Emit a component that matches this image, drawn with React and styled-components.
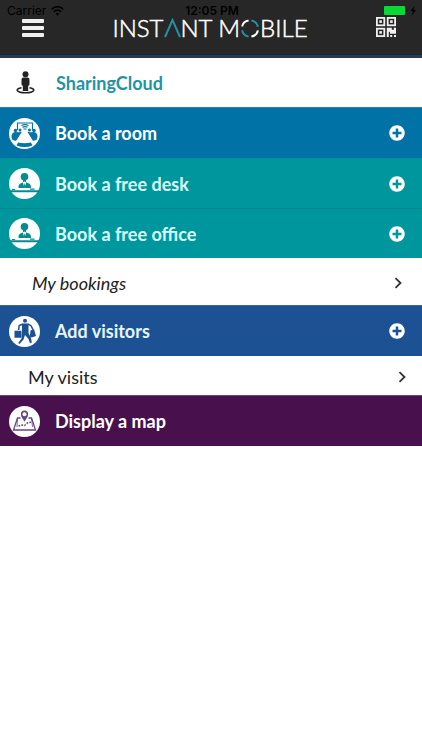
import styled, { createGlobalStyle } from "styled-components"
import { FaPlusCircle } from "react-icons/fa"

const GlobalStyle = createGlobalStyle`
    * {
        box-sizing: border-box;
    }

    body {
        margin: 0;
        background-color: white;
        font-family: Lato, "Open Sans", sans-serif;
    }
`

const Header = styled.header`
    position: relative;
    display: flex;
    justify-content: space-between;
    align-items: center;
    height: 58px;
    padding: 0 26px 0 22px;
    background-color: #272727;
    border-bottom: 3px solid #243a5e;
`

const StatusBar = styled.div`
    position: absolute;
    top: 0;
    left: 0;
    right: 0;
    display: grid;
    grid-template-columns: 1fr auto 1fr;
    align-items: center;
    height: 21px;
    padding: 0 5px 0 7px;
    color: black;
    font-family: Inter, "Liberation Sans", sans-serif;
    font-size: 12px;
    line-height: 12px;
    pointer-events: none;
`

const Network = styled.span`
    display: flex;
    align-items: center;
    gap: 5px;
`

const Clock = styled.span`
    font-weight: 600;
`

const Power = styled.span`
    display: flex;
    justify-content: flex-end;
    align-items: center;
`

const IconButton = styled.button`
    display: flex;
    padding: 0;
    border: none;
    background: none;
    color: #f0f0f0;
    cursor: pointer;
`

const Logo = styled.h1`
    display: flex;
    align-items: center;
    margin: 0;
    color: white;
    font-size: 24px;
    font-weight: 300;
    line-height: 20px;
    -webkit-text-stroke: 0.5px white;

    svg {
        display: block;
    }
`

const Menu = styled.nav`
    display: flex;
    flex-direction: column;
`

const Site = styled.div`
    display: flex;
    align-items: center;
    height: 49px;
    padding: 0 12px;
    gap: 18px;
    color: #1e94a4;
    font-size: 18px;
    font-weight: 700;
`

const SiteIcon = styled.span`
    display: flex;
    justify-content: center;
    width: 26px;
`

const MenuItem = styled.div`
    display: flex;
    align-items: center;
    height: ${props => (props.$tall ? "51px" : "50px")};
    padding: 0 17px 0 9px;
    background-color: ${props => props.$color};
    border-top: 1px solid ${props => props.$edge};
    color: white;
`

const MenuLink = styled.a`
    display: flex;
    flex: 1;
    align-items: center;
    gap: 15px;
    color: ${props => props.$color || "white"};
    font-size: 18px;
    font-weight: 700;
    text-decoration: none;
`

const SubLink = styled.a`
    display: flex;
    justify-content: space-between;
    align-items: center;
    height: ${props => (props.$compact ? "39px" : "47px")};
    padding: ${props => (props.$compact ? "2px 16px 0 28px" : "2px 20px 0 32px")};
    color: #222222;
    font-size: 18px;
    font-style: ${props => (props.$italic ? "italic" : "normal")};
    text-decoration: none;
`

function WifiIcon() {
    return (
        <svg width="13" height="10" viewBox="0 0 13 10" fill="none" stroke="black" strokeWidth="1.7">
            <path d="M.7 3.5C4-.2 9-.2 12.3 3.5M2.9 5.8C5 3.6 8 3.6 10.1 5.8" />
            <path d="M4.5 7.5Q6.5 5.8 8.5 7.5L6.5 9.7Z" fill="black" stroke="none" />
        </svg>
    )
}

function BatteryIcon() {
    return (
        <svg width="33" height="10" viewBox="0 0 33 10">
            <rect width="21" height="9" rx="1" fill="#08d936" />
            <path d="M22.500 3q2 1.700 0 3.400z" fill="black" />
            <path d="M30.500 0l-4 5h2.500L27.700 9.500 32 4h-2.500z" fill="black" />
        </svg>
    )
}

function BarsIcon() {
    return (
        <svg width="22" height="18" viewBox="0 0 22 18" fill="currentColor">
            <rect width="22" height="4" rx="1" />
            <rect y="7" width="22" height="4" rx="1" />
            <rect y="14" width="22" height="4" rx="1" />
        </svg>
    )
}

function QrIcon() {
    return (
        <svg width="20" height="22" viewBox="0 0 20 22">
            <g fill="none" stroke="currentColor" strokeWidth="1.800">
                <rect x=".9" y=".9" width="7.400" height="7.400" />
                <rect x="11.700" y=".9" width="7.400" height="7.400" />
                <rect x=".9" y="11.700" width="7.400" height="7.400" />
            </g>
            <g fill="currentColor">
                <rect x="3.300" y="3.300" width="2.600" height="2.600" />
                <rect x="14.100" y="3.300" width="2.600" height="2.600" />
                <rect x="3.300" y="14.100" width="2.600" height="2.600" />
                <path d="M10.800 10.800h5v2h2v-2H20v6h-6v-2h-1.200V20h-2z" />
                <path d="M14.200 18h2v2h-2zM18 18h2v2h-2z" />
            </g>
        </svg>
    )
}

function SiteMarker() {
    return (
        <svg width="19" height="23" viewBox="0 0 19 23" fill="#222222">
            <circle cx="9.500" cy="3.200" r="3" />
            <path d="M7.500 6.500h4q2 0 2 2v5q0 1-1.300 1.200V20H6.800v-5.300Q5.500 14.500 5.500 13.500v-5q0-2 2-2z" />
            <path d="M5.500 16.700C-1 17.800-.2 21.800 9.500 21.800s10.500-4 4-5.100" fill="none" stroke="#222222" strokeWidth="1.600" />
        </svg>
    )
}

function ChevronIcon() {
    return (
        <svg width="8" height="12" viewBox="0 0 8 12" fill="none" stroke="#333333" strokeWidth="1.800">
            <path d="M1.500 1.200L6.500 6l-5 4.800" />
        </svg>
    )
}

function RoomIcon() {
    return (
        <svg width="31" height="31" viewBox="0 0 31 31">
            <circle cx="15.5" cy="15.5" r="15.5" fill="white" />
            <g fill="none" stroke="#0873a5">
                <path d="M8.500 12V5h15v7" strokeWidth="1.200" />
                <path d="M12.500 7.500q3.500-1.800 7 0M13.500 9.300q2.500-1.300 5 0" strokeWidth="1.100" />
            </g>
            <g fill="#0873a5">
                <path d="M14.500 10.500h3v1h-3z" />
                <circle cx="6.500" cy="12.500" r="1.800" />
                <circle cx="25" cy="12.500" r="1.800" />
                <circle cx="11" cy="12" r="1.500" />
                <circle cx="20.500" cy="12" r="1.500" />
                <path d="M2.500 19q0-4.500 3.500-5l4 .2q2-1 3-.2L7.500 23l-4-1zM28.500 19q0-4.500-3.500-5l-4 .2q-2-1-3-.2L23.500 23l4-1z" />
                <path d="M9 24.500q6.500 1.500 13 0l1.500 3q-8 3-16 0z" />
            </g>
            <path d="M13 14h5.500l5.500 9q-8.500 1.500-17 0z" fill="white" />
        </svg>
    )
}

function DeskIcon() {
    return (
        <svg width="31" height="31" viewBox="0 0 31 31">
            <circle cx="15.5" cy="15.5" r="15.5" fill="white" />
            <g fill="#078b93">
                <circle cx="15.500" cy="8.800" r="3.800" />
                <path d="M14 11h3v3.300l3.500 1.500q1.800 1 1.500 4.200H9.500q-.4-3.200 1.500-4.200l3-1.500z" />
                <path d="M1 22.300h29v2H1zM21 20.500h4.500v1.200H21zM3 21h3v1H3z" />
            </g>
            <path d="M13.800 14.500l1.700 5.500 1.700-5.500-1.700-1z" fill="white" />
            <path d="M15.500 15l-.8 3.500.8 1.500.8-1.500z" fill="#078b93" />
        </svg>
    )
}

function VisitorIcon() {
    return (
        <svg width="31" height="31" viewBox="0 0 31 31">
            <circle cx="15.5" cy="15.5" r="15.5" fill="white" />
            <g fill="#1d5192">
                <circle cx="16" cy="4.700" r="2" />
                <path d="M13 7.500h6.500v9.500l2.500 5 .8 4.500-1.800.7-1.500-4.200L16 19l-1.500 4.500-4 4.500-1.300-1 3.300-4.500L13 17z" />
                <path d="M5.500 14.800h7v7h-7zM21.500 14.500l3.500-1.500 2 7-4.500 1.500-1.700-1z" />
            </g>
            <path d="M13.500 8.200l-3.300 1.300-.6 4.500M19 8.200l3 1.500 2 4" fill="none" stroke="#1d5192" strokeWidth="1.500" />
        </svg>
    )
}

function MapIcon() {
    return (
        <svg width="31" height="31" viewBox="0 0 31 31" fill="none" stroke="#674678">
            <circle cx="15.5" cy="15.5" r="15.5" fill="white" stroke="none" />
            <path d="M11.500 12H8.500L4.500 24h22l-4-12h-3" strokeWidth="1.300" />
            <path d="M8.500 12l-.5 9M22.500 12l1 9" strokeWidth=".8" />
            <path d="M9.500 20l3.500-1 2.500.5 3-2.500 3.500-.8" strokeWidth="1.500" strokeDasharray="1.800 1.200" />
            <path d="M15.500 15.700c-1-2.500-3.600-4.400-3.600-7.500a3.600 3.600 0 0 1 7.200 0c0 3.100-2.600 5-3.600 7.500z" fill="#674678" stroke="none" />
            <circle cx="15.500" cy="8.200" r="2" fill="white" stroke="none" />
        </svg>
    )
}

function BookingItem({ color, edge, icon, label, textColor, action, tall }) {
    return (
        <MenuItem $color={color} $edge={edge} $tall={tall}>
            <MenuLink href="#" $color={textColor}>
                {icon}
                {label}
            </MenuLink>
            {action && (
                <IconButton type="button" aria-label={action}>
                    <FaPlusCircle size={16} color="white" />
                </IconButton>
            )}
        </MenuItem>
    )
}

function App() {
    return (
        <>
            <GlobalStyle />
            <Header>
                <IconButton type="button" aria-label="Menu">
                    <BarsIcon />
                </IconButton>
                <Logo>
                    INST
                    <svg width="17" height="20" viewBox="0 0 17 20" fill="none" stroke="#2091a3" strokeWidth="2">
                        <path d="M1 19L8.500 2l7.500 17" />
                    </svg>
                    NT&nbsp;M
                    <svg width="20" height="20" viewBox="0 0 20 20" fill="none" strokeWidth="2">
                        <path d="M2.100 8.400A8 8 0 0 1 8.600 2.600M17.900 12.400A8 8 0 0 1 11.400 18.600" stroke="white" />
                        <path d="M11.400 2.600A8 8 0 0 1 17.900 8.800M8.600 18.600A8 8 0 0 1 2.100 12.200" stroke="#2091a3" />
                    </svg>
                    BILE
                </Logo>
                <IconButton type="button" aria-label="Scan a code">
                    <QrIcon />
                </IconButton>
                <StatusBar>
                    <Network>
                        Carrier
                        <WifiIcon />
                    </Network>
                    <Clock>12:05 PM</Clock>
                    <Power>
                        <BatteryIcon />
                    </Power>
                </StatusBar>
            </Header>
            <Menu>
                <Site>
                    <SiteIcon>
                        <SiteMarker />
                    </SiteIcon>
                    SharingCloud
                </Site>
                <BookingItem tall color="#0072a6" edge="#2b7fae" icon={<RoomIcon />} label="Book a room" action="Book a room now" />
                <BookingItem color="#00969d" edge="#078a96" textColor="#d9ffff" icon={<DeskIcon />} label="Book a free desk" action="Book a desk now" />
                <BookingItem color="#00969d" edge="#07868d" textColor="#d9ffff" icon={<DeskIcon />} label="Book a free office" action="Book an office now" />
                <SubLink href="#" $italic>
                    My bookings
                    <ChevronIcon />
                </SubLink>
                <BookingItem tall color="#1c5294" edge="#3d6598" textColor="#e6f5ff" icon={<VisitorIcon />} label="Add visitors" action="Add a visitor" />
                <SubLink href="#" $compact>
                    My visits
                    <ChevronIcon />
                </SubLink>
                <BookingItem tall color="#48114e" edge="#6a4570" icon={<MapIcon />} label="Display a map" />
            </Menu>
        </>
    )
}

export default App
